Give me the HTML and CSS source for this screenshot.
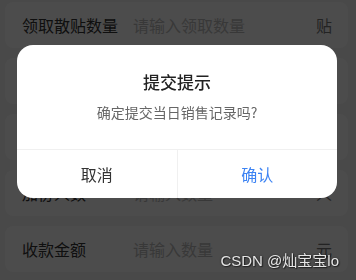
FILE: index.html
```html
<!DOCTYPE html>
<html lang="zh-CN">
<head>
<meta charset="utf-8">
<link rel="stylesheet" href="styles.css">
</head>
<body>
<div class="page">
  <div class="card"><span class="label">领取散贴数量</span><span class="ph">请输入领取数量</span><span class="unit">贴</span></div>
  <div class="card"><span class="label">销售散贴数量</span><span class="ph">请输入销售数量</span><span class="unit">贴</span></div>
  <div class="card"><span class="label">剩余散贴数量</span><span class="ph">请输入剩余数量</span><span class="unit">贴</span></div>
  <div class="card"><span class="label">加协人数</span><span class="ph">请输入数量</span><span class="unit">人</span></div>
  <div class="card"><span class="label">收款金额</span><span class="ph">请输入数量</span><span class="unit">元</span></div>
</div>
<div class="mask">
  <div class="dialog">
    <div class="dialog-body">
      <div class="title">提交提示</div>
      <div class="msg">确定提交当日销售记录吗?</div>
    </div>
    <div class="footer">
      <div class="btn cancel">取消</div>
      <div class="btn ok">确认</div>
    </div>
  </div>
</div>
<div class="watermark">CSDN @灿宝宝lo</div>
</body>
</html>
```
FILE: styles.css
```css
html, body {
  margin: 0;
  padding: 0;
  width: 356px;
  height: 280px;
  overflow: hidden;
  background: #f3f3f3;
  font-family: "Liberation Sans", "Noto Sans CJK SC", sans-serif;
}
.page {
  padding: 2px 8px 0 5px;
  display: flex;
  flex-direction: column;
  gap: 10px;
}
.card {
  height: 46px;
  background: #fff;
  border-radius: 8px;
  display: flex;
  align-items: center;
  padding: 0 16px 0 17px;
  font-size: 16px;
  font-family: "Noto Sans CJK SC", sans-serif;
}
.label {
  color: #333;
  width: 111px;
  flex: none;
}
.ph {
  color: #bdbdbd;
  flex: 1;
}
.unit {
  color: #777;
}
.mask {
  position: fixed;
  inset: 0;
  background: rgba(0, 0, 0, 0.7);
  display: flex;
  justify-content: center;
  padding-top: 45px;
  padding-left: 0;
  align-items: flex-start;
}
.dialog {
  width: 320px;
  margin-left: -2px;
  background: #fff;
  border-radius: 16px;
  overflow: hidden;
  font-family: "Noto Sans CJK SC", sans-serif;
}
.dialog-body {
  padding: 25px 16px 26px;
  text-align: center;
}
.title {
  font-size: 17px;
  line-height: 24px;
  color: #222;
  font-weight: 500;
}
.msg {
  margin-top: 7px;
  font-size: 14px;
  line-height: 22px;
  color: #666;
}
.footer {
  display: flex;
  height: 48px;
  border-top: 1px solid #f0f0f0;
}
.btn {
  flex: 1;
  display: flex;
  align-items: center;
  justify-content: center;
  font-size: 16px;
}
.cancel {
  color: #333;
  border-right: 1px solid #f0f0f0;
}
.ok {
  color: #3c83f3;
}
.watermark {
  position: fixed;
  right: 17px;
  bottom: 10px;
  font-size: 15px;
  line-height: 18px;
  color: #e6e6e6;
  text-shadow: 0 0 2px #222, 1px 1px 1px #222;
  font-family: "Liberation Sans", "Noto Sans CJK SC", sans-serif;
}
```
